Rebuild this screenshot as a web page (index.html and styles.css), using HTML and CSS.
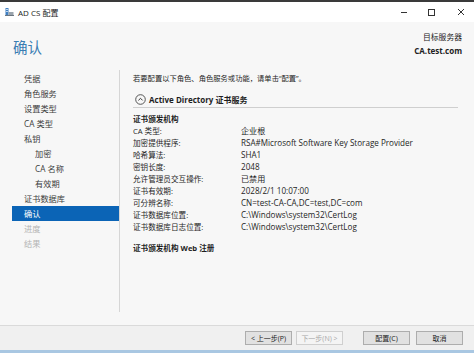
FILE: index.html
```html
<!DOCTYPE html>
<html lang="zh-CN">
<head>
  <meta charset="UTF-8" />
  <title>AD CS 配置</title>
  <link rel="stylesheet" href="styles.css">
</head>
<body>
  <div class="window">
    <div class="top-strip"></div>

    <div class="titlebar">
      <svg class="app-icon" width="9" height="8" viewBox="0 0 9 8">
        <rect x="0.5" y="0" width="3" height="7" fill="#3f7fc2"/>
        <rect x="1" y="1" width="2" height="1" fill="#bcd6ef"/>
        <rect x="1" y="3" width="2" height="1" fill="#bcd6ef"/>
        <rect x="3.5" y="4" width="5" height="3" fill="#9aa4ad"/>
        <rect x="0" y="7" width="9" height="1" fill="#6b7680"/>
      </svg>
      <span class="title-text">AD CS 配置</span>
      <div class="win-controls">
        <svg width="74" height="10" viewBox="0 0 74 10">
          <line x1="11" y1="5.5" x2="17" y2="5.5" stroke="#333" stroke-width="1"/>
          <rect x="38.5" y="2.5" width="6" height="6" fill="none" stroke="#333" stroke-width="1"/>
          <line x1="68" y1="2" x2="74" y2="8" stroke="#333" stroke-width="1"/>
          <line x1="74" y1="2" x2="68" y2="8" stroke="#333" stroke-width="1"/>
        </svg>
      </div>
    </div>

    <div class="header">
      <h1>确认</h1>
      <div class="target">
        <div>目标服务器</div>
        <div class="target-name">CA.test.com</div>
      </div>
    </div>

    <div class="main">
      <ul class="nav">
        <li>凭据</li>
        <li>角色服务</li>
        <li>设置类型</li>
        <li>CA 类型</li>
        <li>私钥</li>
        <li class="sub">加密</li>
        <li class="sub">CA 名称</li>
        <li class="sub">有效期</li>
        <li>证书数据库</li>
        <li class="active">确认</li>
        <li class="disabled">进度</li>
        <li class="disabled">结果</li>
      </ul>

      <div class="content">
        <p class="intro">若要配置以下角色、角色服务或功能，请单击“配置”。</p>

        <div class="section-head">
          <svg class="collapse" width="11" height="11" viewBox="0 0 11 11">
            <circle cx="5.5" cy="5.5" r="4.8" fill="none" stroke="#444" stroke-width="0.9"/>
            <polyline points="3.4,6.4 5.5,4.3 7.6,6.4" fill="none" stroke="#333" stroke-width="1"/>
          </svg>
          <span>Active Directory 证书服务</span>
        </div>

        <div class="group-title">证书颁发机构</div>
        <div class="details">
          <span>CA 类型:</span><span class="val">企业根</span>
          <span>加密提供程序:</span><span class="val">RSA#Microsoft Software Key Storage Provider</span>
          <span>哈希算法:</span><span class="val">SHA1</span>
          <span>密钥长度:</span><span class="val">2048</span>
          <span>允许管理员交互操作:</span><span class="val">已禁用</span>
          <span>证书有效期:</span><span class="val">2028/2/1 10:07:00</span>
          <span>可分辨名称:</span><span class="val">CN=test-CA-CA,DC=test,DC=com</span>
          <span>证书数据库位置:</span><span class="val">C:\Windows\system32\CertLog</span>
          <span>证书数据库日志位置:</span><span class="val">C:\Windows\system32\CertLog</span>
        </div>

        <div class="group-title web">证书颁发机构 Web 注册</div>
      </div>
    </div>

    <div class="footer">
      <button>&lt; 上一步(P)</button>
      <button class="btn-disabled">下一步(N) &gt;</button>
      <button class="btn-gap">配置(C)</button>
      <button class="btn-last">取消</button>
    </div>

    <div class="bottom-strip"></div>
  </div>
</body>
</html>
```

FILE: styles.css
```css
body {
  margin: 0;
  padding: 0;
  font-family: "Open Sans", "Noto Sans CJK SC", sans-serif;
  font-size: 7.3px;
  color: #1e1e1e;
  background: #f7f7f7;
}

.window {
  width: 474px;
  height: 353px;
  display: flex;
  flex-direction: column;
  overflow: hidden;
  background: #f7f7f7;
}

.top-strip {
  height: 2px;
  background: #3a3a3a;
}

.titlebar {
  height: 20px;
  background: #ffffff;
  display: flex;
  align-items: center;
  padding-left: 5px;
}

.app-icon {
  margin-right: 4px;
}

.title-text {
  font-size: 8px;
  color: #222;
}

.win-controls {
  margin-left: auto;
  margin-right: 10px;
  display: flex;
}

.header {
  height: 48px;
  display: flex;
  justify-content: space-between;
  padding: 0 12px 0 13px;
}

h1 {
  margin: 16px 0 0 0;
  font-size: 14.5px;
  font-weight: normal;
  color: #3a7db3;
  line-height: 20px;
}

.target {
  margin-top: 9px;
  text-align: right;
  line-height: 13px;
  font-size: 7.8px;
  color: #222;
}

.target-name {
  font-weight: bold;
  font-size: 8px;
}

.main {
  height: 255px;
  display: flex;
}

.nav {
  list-style: none;
  margin: 0;
  padding: 1px 0 0 0;
  width: 107px;
  margin-left: 12px;
  height: 241px;
  border-right: 1px solid #d6d6d6;
  font-size: 8.2px;
  color: #3c3c3c;
}

.nav li {
  height: 15px;
  line-height: 15px;
  padding-left: 12px;
}

.nav li.sub {
  padding-left: 23px;
}

.nav li.active {
  background: #0b64b6;
  color: #ffffff;
}

.nav li.disabled {
  color: #b4b4b4;
}

.content {
  flex: 1;
  padding: 2px 16px 0 13px;
}

.intro {
  margin: 0;
  line-height: 12px;
}

.section-head {
  margin-top: 8px;
  height: 15px;
  display: flex;
  align-items: center;
  border-bottom: 1px solid #cfcfcf;
  font-size: 8px;
  font-weight: bold;
}

.collapse {
  margin: 0 3px 0 2px;
}

.group-title {
  margin-top: 5px;
  line-height: 12px;
  font-size: 7.6px;
  font-weight: bold;
}

.group-title.web {
  margin-top: 9px;
}

.details {
  display: grid;
  grid-template-columns: 108px auto;
  line-height: 12px;
  font-size: 7.6px;
}

.details .val {
  font-size: 8.1px;
}

.footer {
  height: 24px;
  border-top: 1px solid #dadada;
  background: #f0f0f0;
  display: flex;
  align-items: center;
  justify-content: flex-end;
  padding-right: 11px;
}

.footer button {
  width: 47px;
  height: 14px;
  margin-left: 4px;
  padding: 0;
  font-family: "Open Sans", "Noto Sans CJK SC", sans-serif;
  font-size: 7px;
  color: #222;
  background: #e1e1e1;
  border: 1px solid #adadad;
  border-radius: 0;
}

.footer button.btn-disabled {
  background: #f4f4f4;
  border-color: #cfcfcf;
  color: #a8a8a8;
}

.footer button.btn-gap {
  margin-left: 20px;
}

.footer button.btn-last {
  margin-left: 6px;
}

.bottom-strip {
  height: 3px;
  background: #a9c7e2;
}
```
